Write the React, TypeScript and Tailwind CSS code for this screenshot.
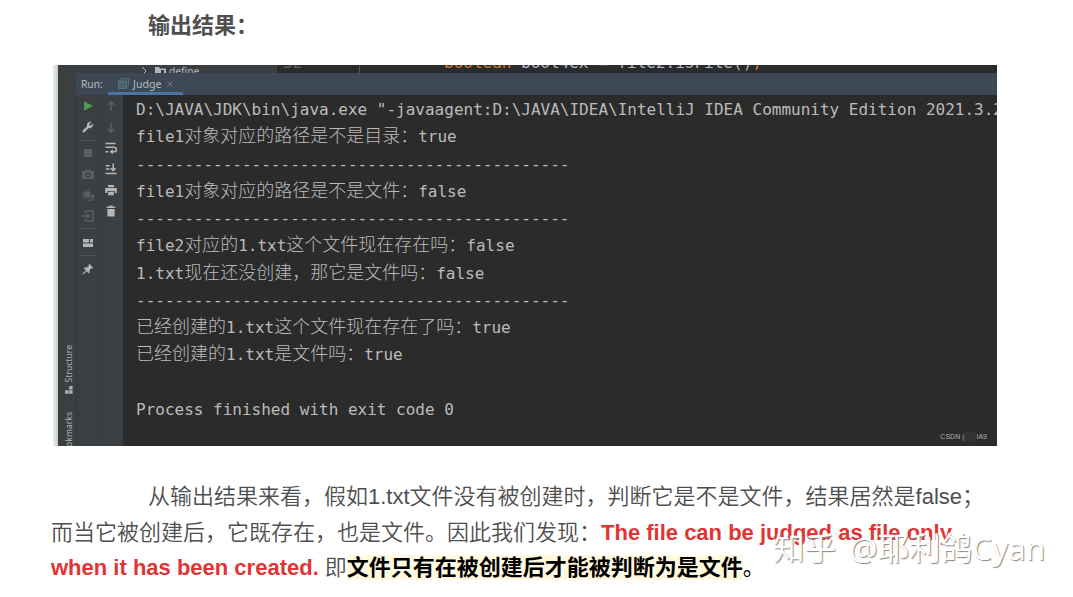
import { Fragment } from 'react';
import type { ReactNode } from 'react';

const DASHES = '-'.repeat(45);

const OUTPUT = [
  'D:\\JAVA\\JDK\\bin\\java.exe "-javaagent:D:\\JAVA\\IDEA\\IntelliJ IDEA Community Edition 2021.3.2',
  'file1对象对应的路径是不是目录：true',
  DASHES,
  'file1对象对应的路径是不是文件：false',
  DASHES,
  'file2对应的1.txt这个文件现在存在吗：false',
  '1.txt现在还没创建，那它是文件吗：false',
  DASHES,
  '已经创建的1.txt这个文件现在存在了吗：true',
  '已经创建的1.txt是文件吗：true',
  '',
  'Process finished with exit code 0',
];

/** One console line. Chinese runs are set a bit larger than the monospace text. */
function ConsoleLine({ text }: { text: string }) {
  const parts = text.split(/([\u3000-\uffef]+)/);
  return (
    <div className="h-[27.25px] whitespace-pre leading-[27.25px]">
      {parts.map((part, i) =>
        i % 2 === 1 ? (
          <span key={i} className="font-['Noto_Sans_CJK_SC',sans-serif] text-[18px] font-light leading-none">
            {part}
          </span>
        ) : (
          <Fragment key={i}>{part}</Fragment>
        ),
      )}
    </div>
  );
}

function Icon({ children, className }: { children: ReactNode; className: string }) {
  return (
    <svg width="12" height="12" viewBox="0 0 12 12" fill="none" stroke="currentColor" className={`flex-none ${className}`}>
      {children}
    </svg>
  );
}

function RunColumn() {
  return (
    <div className="flex w-[22px] flex-none flex-col items-center border-l border-[#35383a] pt-[5px]">
      <Icon className="text-[#499c54]">
        <path d="M2 1.2L10.8 6 2 10.8z" fill="currentColor" stroke="none" />
      </Icon>
      <Icon className="mt-[9px] text-[#b4b6b8]">
        <path d="M1.6 10.4L6.4 5.6" strokeWidth="2.3" strokeLinecap="round" />
        <path d="M9.4 1A3.4 3.4 0 005 5.2L6.8 7A3.4 3.4 0 0011 2.6L9 4.6 7.4 4.4 7.4 3z" fill="currentColor" stroke="none" />
      </Icon>
      <div className="mt-[7px] h-px w-4 bg-[#505355]" />
      <Icon className="mt-[6px] text-[#5c5f61]">
        <rect x="2" y="2" width="8" height="8" fill="currentColor" stroke="none" />
      </Icon>
      <Icon className="mt-[9px] text-[#5c5f61]">
        <path d="M0 3h3l1-1.6h4L9 3h3v8H0zM6 4.2a2.7 2.7 0 100 5.4 2.7 2.7 0 000-5.4z" fill="currentColor" fillRule="evenodd" stroke="none" />
        <circle cx="6" cy="6.9" r="1.3" fill="currentColor" stroke="none" />
      </Icon>
      <Icon className="mt-[9px] text-[#5c5f61]">
        <ellipse cx="5.2" cy="5.6" rx="2.7" ry="3.4" fill="currentColor" stroke="none" />
        <path d="M3 .6l1.3 1.8M7.4.6L6.1 2.4M.4 4.2h9M.4 6.5h3M1 9.6l2-1.4" strokeWidth="1.2" />
        <path d="M6.2 9.2a2.5 2.5 0 014.4-1.6M11.2 5.5v2.6H8.8M11.2 9a2.5 2.5 0 01-4.2 1.6" strokeWidth="1.5" />
      </Icon>
      <Icon className="mt-[9px] text-[#5c5f61]">
        <path d="M3.3 3.3V1h7.5v10H3.3V8.7" strokeWidth="1.5" />
        <path d="M0 6h7M4.8 3.5L7.4 6 4.8 8.5" strokeWidth="1.5" />
      </Icon>
      <div className="mt-[6px] h-px w-4 bg-[#505355]" />
      <Icon className="mt-[8px] text-[#b4b6b8]">
        <path d="M1 2h6v3.6H1zM8 2h3v3.6H8zM1 6.4h10v3.6H1z" fill="currentColor" stroke="none" />
      </Icon>
      <div className="mt-[6px] h-px w-4 bg-[#505355]" />
      <Icon className="mt-[7px] text-[#b4b6b8]">
        <path d="M7.2.8l4 4-1 .6-.8-.2-1.9 2 .2 2.2-1 .8-4.9-4.9.9-.9 2.2.2 2-1.9-.3-.9z" fill="currentColor" stroke="none" />
        <path d="M4.2 7.8L.8 11.2" strokeWidth="1.2" />
      </Icon>
    </div>
  );
}

function OutputColumn() {
  return (
    <div className="flex w-[25px] flex-none flex-col items-center border-l border-[#383b3d] pt-[5px]">
      <Icon className="text-[#5c5f61]">
        <path d="M6 11V1.8M2.6 5.2L6 1.8l3.4 3.4" strokeWidth="1.5" />
      </Icon>
      <Icon className="mt-[10px] text-[#5c5f61]">
        <path d="M6 1v9.2M2.6 6.8L6 10.2l3.4-3.4" strokeWidth="1.5" />
      </Icon>
      <Icon className="mt-[8px] text-[#b4b6b8]">
        <path d="M.5 1.5h10M.5 5.2h8.6a2.2 2.2 0 010 4.6H7M.5 9.8h2.8" strokeWidth="1.5" />
        <path d="M7.8 7v5.4L4.8 9.8z" fill="currentColor" stroke="none" />
      </Icon>
      <Icon className="mt-[9px] text-[#b4b6b8]">
        <path d="M.8 2.7h3.8M.8 6h3.8M.5 10.5h11M8.2.6v7M5.9 5.2l2.3 2.4 2.3-2.4" strokeWidth="1.5" />
      </Icon>
      <Icon className="mt-[9px] text-[#b4b6b8]">
        <path d="M3 1h6v2.3H3zM.2 4h11.6v4.9H9.7V7H2.3v1.9H.2zM3.2 7.8h5.6v3.4H3.2z" fill="currentColor" stroke="none" />
      </Icon>
      <Icon className="mt-[9px] text-[#b4b6b8]">
        <path d="M1.8 1.6h2.7V.6h3v1h2.7v1.5H1.8zM2.4 4h7.2v7.4H2.4z" fill="currentColor" stroke="none" />
      </Icon>
    </div>
  );
}

function SideBar() {
  return (
    <div className="flex w-[18px] flex-none flex-col items-center overflow-hidden bg-[#3c3f41] pl-1 pt-[280px] font-['Noto_Sans',sans-serif] text-[8.6px] leading-[10px] text-[#b0b2b4]">
      <span className="h-[38px] rotate-180 whitespace-nowrap [writing-mode:vertical-rl]">Structure</span>
      <svg width="8" height="8" viewBox="0 0 8 8" fill="currentColor" className="mt-1 flex-none">
        <path d="M4.2 0h3.4v3.6H4.2zM.2 4.2h3.4v3.6H.2zM4.2 4.2h3.4v3.6H4.2z" />
      </svg>
      <span className="mt-[18px] flex-none rotate-180 whitespace-nowrap [writing-mode:vertical-rl]">okmarks</span>
    </div>
  );
}

/** Last visible slice of the editor above the run window. */
function EditorStrip() {
  return (
    <div className="flex h-2 flex-none overflow-hidden bg-[#2b2b2b] font-['DejaVu_Sans_Mono',monospace] text-[16px] leading-[18px]">
      <div className="flex w-[201px] flex-none gap-2 bg-[#3c3f41] pl-[65px] font-['Noto_Sans',sans-serif] text-[10.2px] leading-[12px] text-[#b4b6b8]">
        <svg width="6" height="8" viewBox="0 0 6 8" fill="none" stroke="currentColor">
          <path d="M1 2l4 4-4 4" />
        </svg>
        <span className="flex gap-[3px]">
          <svg width="11" height="8" viewBox="0 0 11 8" fill="currentColor">
            <path d="M0 2h4l1 1.5h6V9H0z" />
            <rect x="6" y="5" width="3" height="3" fill="#3c3f41" />
          </svg>
          define
        </span>
      </div>
      <span className="-mt-[11px] w-[83px] border-r border-[#555] pl-[6px] text-[#606366]">32</span>
      <span className="-mt-[11px] whitespace-pre pl-[84px] text-[#a9b7c6]">
        <span className="text-[#cc7832]">boolean</span> bool4ex = file2.isFile()<span className="text-[#cc7832]">;</span>
      </span>
    </div>
  );
}

function RunHeader() {
  return (
    <div className="flex h-[22px] flex-none bg-[#3d4855] pl-[5px] font-['Noto_Sans',sans-serif] text-[10.2px] leading-[22px] text-[#b8babc]">
      <span className="w-[27px]">Run:</span>
      <div className="flex w-[75px] items-center border-b-[3px] border-[#4a74a8] pl-[10px]">
        <svg width="11" height="12" viewBox="0 0 11 12" fill="none" stroke="#53707c" className="mt-[2px]">
          <path d="M2.5 3V.8h8V8H9" />
          <path d="M.5 3h8v7.5h-8z" fill="#48616b" />
          <path d="M.5 4h8" strokeWidth="1.6" />
        </svg>
        <span className="ml-[4px] mt-[2px] text-[10.6px]">Judge</span>
        <svg width="6" height="6" viewBox="0 0 6 6" stroke="#727b84" className="ml-[6px] mt-[3px]">
          <path d="M.5.5l5 5M5.5.5l-5 5" />
        </svg>
      </div>
    </div>
  );
}

function IdeWindow() {
  return (
    <div className="ml-[53px] mt-[14px] flex h-[381px] w-[944px] bg-[#2b2b2b]">
      <div className="w-[5px] flex-none bg-gradient-to-r from-[#ebedee] to-[#c9cdd0]" />
      <SideBar />
      <div className="flex min-w-0 flex-1 flex-col">
        <EditorStrip />
        <RunHeader />
        <div className="flex min-h-0 flex-1">
          <div className="flex bg-[#3c3f41]">
            <RunColumn />
            <OutputColumn />
          </div>
          <div className="relative min-w-0 flex-1 overflow-hidden pl-[13px] pt-px font-['DejaVu_Sans_Mono',monospace] text-[16px] text-[#bbbbbb]">
            {OUTPUT.map((line, i) => (
              <ConsoleLine key={i} text={line} />
            ))}
            <span className="absolute bottom-[5px] right-[10px] flex font-['Liberation_Sans',sans-serif] text-[7px] leading-[9px] text-[#b0b0b0]">
              CSDN (<span className="w-[12px] bg-[#333]" />
              IA9
            </span>
          </div>
        </div>
      </div>
    </div>
  );
}

export default function App() {
  return (
    <main className="relative h-[597px] w-[1073px] overflow-hidden bg-white font-['Liberation_Sans','Noto_Sans_CJK_SC',sans-serif] text-[22px] text-[#4f4f4f]">
      <h2 className="h-[51px] pl-[148px] font-bold leading-[51px]">输出结果：</h2>
      <IdeWindow />
      <div className="whitespace-nowrap pl-[51px] pt-[33px]">
        <p className="h-[35px] pl-[97px] font-[350] leading-[35px]">从输出结果来看，假如1.txt文件没有被创建时，判断它是不是文件，结果居然是false；</p>
        <p className="h-[36px] font-[350] leading-[37px]">
          而当它被创建后，它既存在，也是文件。因此我们发现：
          <strong className="text-[#e03535]">The file can be judged as file only</strong>
        </p>
        <p className="h-[35px] leading-[35px]">
          <strong className="text-[#e03535]">when it has been created.</strong>
          <span className="ml-[6px] font-[350]">即</span>
          <strong className="bg-[#fff9e0] text-black">文件只有在被创建后才能被判断为是文件</strong>
          <span className="text-black">。</span>
        </p>
      </div>
      <span className="absolute left-[773px] top-[528px] whitespace-nowrap font-['Noto_Sans','Noto_Sans_CJK_SC',sans-serif] text-[31.5px] leading-[40px] text-white [text-shadow:1px_1px_1px_#888] [word-spacing:5px]">
        知乎 @耶利鸽Cyan
      </span>
    </main>
  );
}
